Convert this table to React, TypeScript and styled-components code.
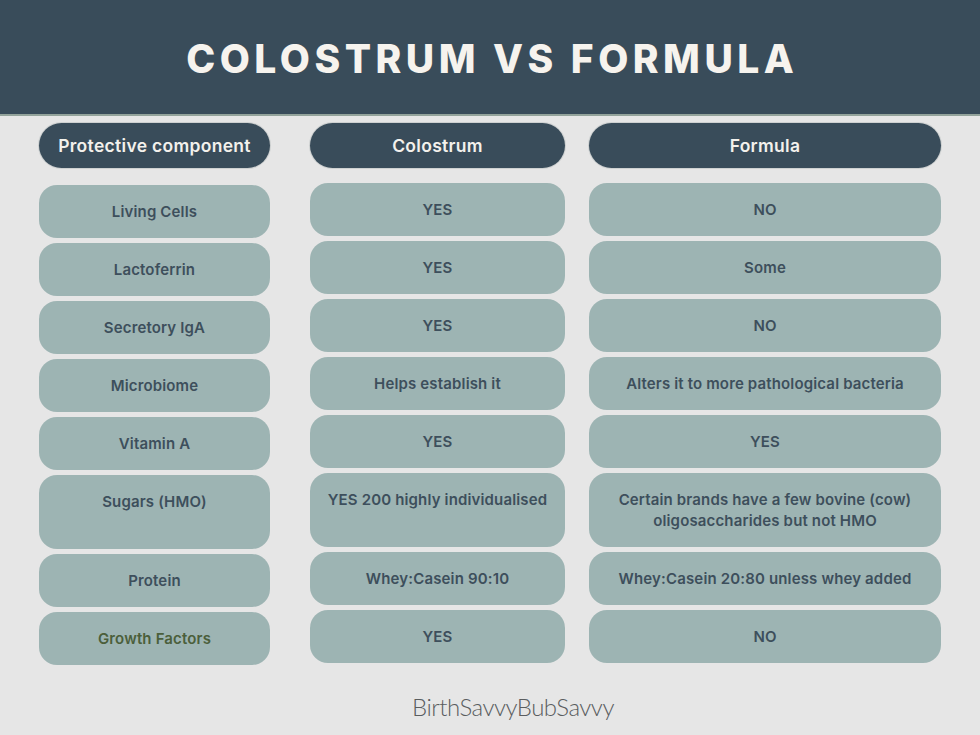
import React from "react";
import styled, { createGlobalStyle } from "styled-components";

const GlobalStyle = createGlobalStyle`
  html, body { margin: 0; padding: 0; }
  body {
    background: #e6e6e6;
    font-family: "Inter", "DejaVu Sans", sans-serif;
    width: 980px;
    height: 735px;
    overflow: hidden;
  }
`;

const Page = styled.div`
  width: 980px;
  height: 735px;
  display: flex;
  flex-direction: column;
  background: #e6e6e6;
`;

const Banner = styled.header`
  height: 114px;
  background: #394c5a;
  border-bottom: 2px solid #93a39b;
  display: flex;
  align-items: center;
  justify-content: center;
`;

const Title = styled.h1`
  margin: 0;
  font-family: "Inter", sans-serif;
  font-weight: 800;
  font-size: 39px;
  letter-spacing: 4.5px;
  padding-left: 4.5px;
  color: #f6f3ee;
  line-height: 1;
  padding-top: 2px;
`;

const Table = styled.div`
  display: flex;
  padding: 7px 0 0 39px;
`;

const Column = styled.div<{ $width: number; $offset: number }>`
  width: ${(p) => p.$width}px;
  margin-left: ${(p) => p.$offset}px;
  display: flex;
  flex-direction: column;
`;

const HeadPill = styled.div`
  height: 45px;
  border-radius: 23px;
  background: #394c5a;
  box-shadow: 0 0 0 1px rgba(160, 170, 170, 0.35);
  display: flex;
  align-items: center;
  justify-content: center;
  color: #f3f1ec;
  font-weight: 600;
  font-size: 17.5px;
  letter-spacing: 0.3px;
  padding-bottom: 1px;
  box-sizing: border-box;
  margin-bottom: 15px;
`;

const Cells = styled.div<{ $shift: number }>`
  display: flex;
  flex-direction: column;
  gap: 5px;
  padding-top: ${(p) => p.$shift}px;
`;

const Cell = styled.div<{ $tall?: boolean; $accent?: boolean }>`
  height: ${(p) => (p.$tall ? 74 : 53)}px;
  box-sizing: border-box;
  border-radius: 18px;
  background: #9db4b3;
  padding: 16px 10px 0;
  text-align: center;
  color: ${(p) => (p.$accent ? "#4b5f3b" : "#3d4f5c")};
  font-weight: 600;
  font-size: 15px;
  letter-spacing: 0.15px;
  line-height: 21px;
`;

const Footer = styled.div`
  flex: 1;
  display: flex;
  align-items: center;
  justify-content: center;
  font-family: "Lato", sans-serif;
  font-weight: 300;
  font-size: 24px;
  letter-spacing: -0.5px;
  color: #5a5d5f;
  padding: 12px 0 0 46px;
`;

type Row = { label: string; colostrum: string; formula: string; tall?: boolean; accent?: boolean };

const rows: Row[] = [
  { label: "Living Cells", colostrum: "YES", formula: "NO" },
  { label: "Lactoferrin", colostrum: "YES", formula: "Some" },
  { label: "Secretory IgA", colostrum: "YES", formula: "NO" },
  { label: "Microbiome", colostrum: "Helps establish it", formula: "Alters it to more pathological bacteria" },
  { label: "Vitamin A", colostrum: "YES", formula: "YES" },
  {
    label: "Sugars (HMO)",
    colostrum: "YES 200 highly individualised",
    formula: "Certain brands have a few bovine (cow) oligosaccharides but not HMO",
    tall: true,
  },
  { label: "Protein", colostrum: "Whey:Casein 90:10", formula: "Whey:Casein 20:80 unless whey added" },
  { label: "Growth Factors", colostrum: "YES", formula: "NO", accent: true },
];

export default function App() {
  return (
    <>
      <GlobalStyle />
      <Page>
        <Banner>
          <Title>COLOSTRUM VS FORMULA</Title>
        </Banner>
        <Table>
          <Column $width={231} $offset={0}>
            <HeadPill>Protective component</HeadPill>
            <Cells $shift={2}>
              {rows.map((r) => (
                <Cell key={r.label} $tall={r.tall} $accent={r.accent}>
                  {r.label}
                </Cell>
              ))}
            </Cells>
          </Column>
          <Column $width={255} $offset={40}>
            <HeadPill>Colostrum</HeadPill>
            <Cells $shift={0}>
              {rows.map((r) => (
                <Cell key={r.label} $tall={r.tall}>
                  {r.colostrum}
                </Cell>
              ))}
            </Cells>
          </Column>
          <Column $width={352} $offset={24}>
            <HeadPill>Formula</HeadPill>
            <Cells $shift={0}>
              {rows.map((r) => (
                <Cell key={r.label} $tall={r.tall}>
                  {r.formula}
                </Cell>
              ))}
            </Cells>
          </Column>
        </Table>
        <Footer>BirthSavvyBubSavvy</Footer>
      </Page>
    </>
  );
}
